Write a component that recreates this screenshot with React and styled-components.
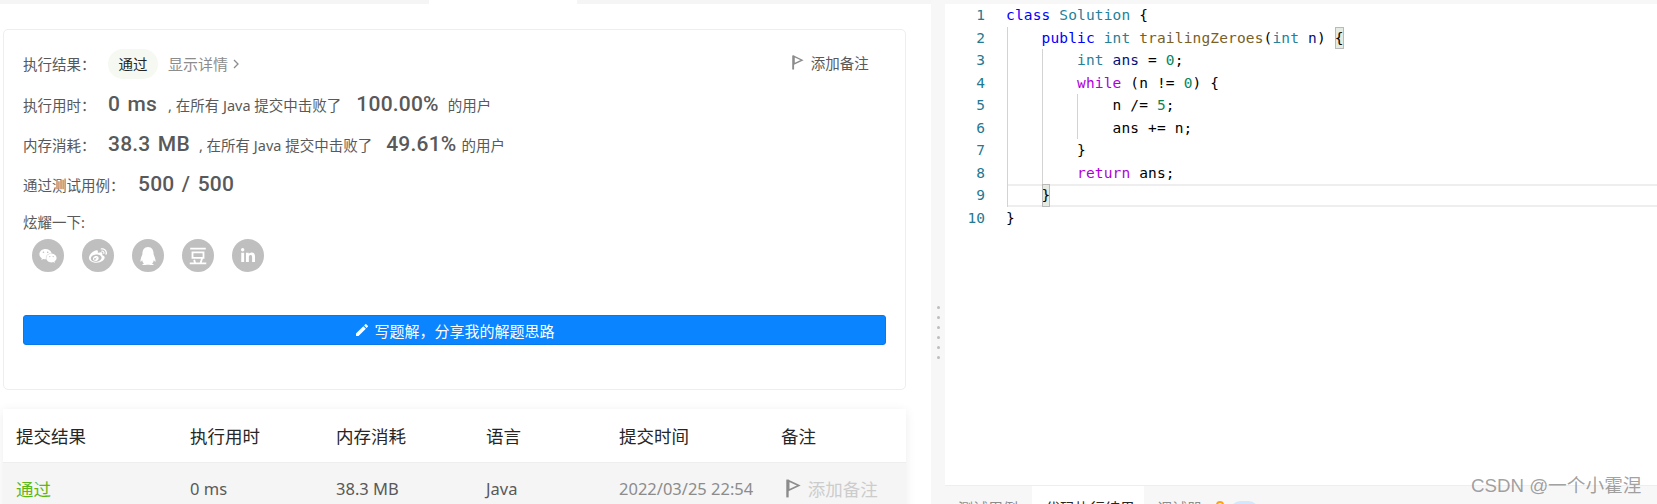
import styled, { createGlobalStyle } from "styled-components";
import { FaWeixin, FaWeibo, FaQq, FaLinkedinIn } from "react-icons/fa";
import { RiDoubanLine } from "react-icons/ri";
import { MdEdit } from "react-icons/md";

const Global = createGlobalStyle`
  html, body { margin: 0; padding: 0; height: 504px; overflow: hidden; background: #fff; }
  body { font-family: "Noto Sans", "Noto Sans CJK SC", sans-serif; }
  * { box-sizing: border-box; }
`;

const Page = styled.div`
  display: flex;
  width: 1657px;
  height: 504px;
  overflow: hidden;
  position: relative;
  background: #f7f7f7;
`;

const LeftPane = styled.div`
  width: 931px;
  flex: none;
  display: flex;
  flex-direction: column;
  background: #fff;
`;

const TopTabs = styled.div`
  height: 4px;
  flex: none;
  display: flex;
`;

const TabStrip = styled.div`
  background: #f5f5f5;
  width: ${p => p.$w}px;
`;

const TabGap = styled.div`
  width: 148px;
`;

const LeftBody = styled.div`
  padding: 25px 25px 0 3px;
  display: flex;
  flex-direction: column;
  gap: 19px;
`;

const Card = styled.div`
  height: 361px;
  border: 1px solid #eeeeee;
  border-radius: 5px;
  padding: 13px 19px 0 19px;
  position: relative;
  color: #595959;
  font-size: 14.5px;
`;

const Row = styled.div`
  display: flex;
  align-items: center;
  height: ${p => p.$h || 40}px;
`;

const Label = styled.div`
  width: ${p => p.$w || 85}px;
  flex: none;
  white-space: pre;
  color: #595959;
`;

const Pill = styled.span`
  width: 50px;
  height: 30px;
  border-radius: 15px;
  background: #f5f9f1;
  color: #262626;
  display: flex;
  align-items: center;
  justify-content: center;
  font-size: 14.5px;
`;

const Detail = styled.span`
  margin-left: 10px;
  font-size: 15px;
  color: #8c8c8c;
`;

const Chevron = styled.svg`
  width: 6px;
  height: 10px;
  margin-left: 5px;
`;

const AddNote = styled.div`
  position: absolute;
  left: 788px;
  top: 22px;
  display: flex;
  align-items: center;
  gap: 7px;
  font-size: 14.5px;
  color: #595959;
`;

const Big = styled.span`
  font-family: Roboto, sans-serif;
  font-weight: 500;
  font-size: 21px;
  color: #595959;
  letter-spacing: 0.2px;
  word-spacing: 2px;
  white-space: pre;
`;

const Beat = styled.span`
  font-size: 14.5px;
  color: #595959;
  white-space: pre;
  margin: 0 ${p => p.$r || 0}px 0 ${p => p.$l || 0}px;
`;

const ShareLabel = styled.div`
  margin-top: 7px;
  line-height: 22px;
`;

const Socials = styled.div`
  display: flex;
  gap: 18px;
  padding-left: 9px;
  margin-top: 6px;
`;

const Social = styled.div`
  width: 32px;
  height: 33px;
  border-radius: 50%;
  background: #bfbfbf;
  color: #fff;
  display: flex;
  align-items: center;
  justify-content: center;
  font-size: ${p => p.$size || 18}px;
`;

const WriteButton = styled.div`
  margin-top: 43px;
  height: 30px;
  width: 863px;
  background: #0a84ff;
  border: 1px solid #0a78e8;
  border-radius: 3px;
  color: #fff;
  font-size: 15px;
  display: flex;
  align-items: center;
  justify-content: center;
  gap: 4px;
`;

const Table = styled.div`
  box-shadow: 0 2px 10px rgba(0, 0, 0, 0.08);
  height: 120px;
`;

const TableRow = styled.div`
  display: grid;
  grid-template-columns: 174px 146px 150px 133px 162px 1fr;
  align-items: center;
  padding: 0 0 ${p => p.$pb || 0}px 13px;
  height: ${p => p.$h}px;
  background: ${p => p.$bg};
  border-bottom: ${p => (p.$line ? "1px solid #eeeeee" : "none")};
`;

const HeadCell = styled.div`
  font-size: 17.5px;
  color: #262626;
`;

const Cell = styled.div`
  font-size: ${p => p.$size || 16.5}px;
  color: ${p => p.$color || "#595959"};
  padding-left: ${p => p.$pad || 0}px;
  display: flex;
  align-items: center;
  gap: 7px;
`;

const Gutter = styled.div`
  width: 14px;
  flex: none;
  display: flex;
  flex-direction: column;
  align-items: center;
  justify-content: center;
  gap: 7px;
  padding-top: 160px;
  height: 504px;
`;

const Dot = styled.span`
  width: 3px;
  height: 3px;
  border-radius: 50%;
  background: #bdbdbd;
`;

const RightPane = styled.div`
  flex: 1;
  min-width: 0;
  display: flex;
  flex-direction: column;
  padding-top: 4px;
`;

const Editor = styled.div`
  height: 481px;
  flex: none;
  background: #fff;
  display: flex;
  font-family: "DejaVu Sans Mono", monospace;
  font-size: 14.5px;
`;

const Numbers = styled.div`
  width: 62px;
  flex: none;
  text-align: right;
  padding-right: 22px;
  color: #237893;
`;

const NumberLine = styled.div`
  height: 22.5px;
  line-height: 22.5px;
`;

const Code = styled.div`
  flex: 1;
  min-width: 0;
`;

const CodeLine = styled.div`
  height: 22.5px;
  line-height: 22.5px;
  white-space: pre;
  position: relative;
  letter-spacing: 0.15px;
  text-indent: -1px;
  color: #000;
  ${p => p.$active && `
    box-shadow: inset 0 2px 0 #eeeeee, inset 0 -2px 0 #eeeeee;
  `}
`;

const Guide = styled.span`
  position: absolute;
  left: ${p => p.$at}px;
  top: 0;
  bottom: 0;
  width: 1px;
  background: #d3d3d3;
`;

const T = styled.span`
  color: ${p => p.$c};
`;

const Match = styled.span`
  background: #e4ebe2;
  outline: 1px solid #b9b9b9;
  outline-offset: -1px;
  display: inline-block;
  height: 22.5px;
  text-indent: 0;
`;

const BottomTabs = styled.div`
  flex: 1;
  display: flex;
  border-top: 1px solid #eeeeee;
  background: #f7f7f7;
  font-size: 15px;
  color: #595959;
  font-family: "Noto Sans CJK SC", sans-serif;
`;

const BottomTab = styled.div`
  padding: 11px 13px 0 13px;
  width: ${p => p.$w}px;
  flex: none;
  background: ${p => (p.$active ? "#fff" : "transparent")};
  color: ${p => (p.$active ? "#262626" : "#8c8c8c")};
  line-height: 22px;
  white-space: pre;
  display: flex;
  gap: 6px;
`;

const Badge = styled.span`
  width: 27px;
  height: 18px;
  margin-top: 4px;
  margin-left: 1px;
  border-radius: 9px;
  background: #d3e8ff;
`;

const Lock = styled.span`
  width: 8px;
  height: 8px;
  margin-top: 4px;
  margin-left: 8px;
  border-radius: 50%;
  border: 2px solid #ffa116;
`;

const Watermark = styled.div`
  position: absolute;
  left: 1471px;
  top: 472px;
  font-family: "Liberation Sans", "Noto Sans CJK SC", sans-serif;
  font-size: 18.7px;
  line-height: 28px;
  color: rgba(120, 120, 120, 0.7);
  white-space: pre;
`;

const Flag = ({ size = 15, color = "#8c8c8c" }) => (
  <svg width={size * 0.78} height={size} viewBox="0 0 12 16">
    <path d="M1 0.5V15.5" stroke={color} strokeWidth="2" fill="none" />
    <path d="M2 1.5L10.5 5.5L2 9.5Z" stroke={color} strokeWidth="1.4" fill="none" />
  </svg>
);

const lines = [
  { g: [], c: [["class", "#0000ff"], [" "], ["Solution", "#267f99"], [" {"]] },
  { g: [0], c: [["    "], ["public", "#0000ff"], [" "], ["int", "#267f99"], [" "], ["trailingZeroes", "#795e26"], ["("], ["int", "#267f99"], [" "], ["n", "#001080"], [") "], ["{", "match"]] },
  { g: [0, 35], c: [["        "], ["int", "#267f99"], [" "], ["ans", "#001080"], [" = "], ["0", "#098658"], [";"]] },
  { g: [0, 35], c: [["        "], ["while", "#af00db"], [" (n != "], ["0", "#098658"], [") {"]] },
  { g: [0, 35, 70], c: [["            n /= "], ["5", "#098658"], [";"]] },
  { g: [0, 35, 70], c: [["            ans += n;"]] },
  { g: [0, 35], c: [["        }"]] },
  { g: [0, 35], c: [["        "], ["return", "#af00db"], [" ans;"]] },
  { g: [0], active: true, c: [["    "], ["}", "match"]] },
  { g: [], c: [["}"]] },
];

export default function App() {
  return (
    <Page>
      <Global />
      <LeftPane>
        <TopTabs>
          <TabStrip $w={429} />
          <TabGap />
          <TabStrip $w={354} />
        </TopTabs>
        <LeftBody>
          <Card>
            <AddNote><Flag />添加备注</AddNote>
            <Row $h={41}>
              <Label>执行结果：</Label>
              <Pill>通过</Pill>
              <Detail>显示详情</Detail>
              <Chevron viewBox="0 0 6 10"><path d="M1 1l4 4-4 4" stroke="#8c8c8c" strokeWidth="1.3" fill="none" /></Chevron>
            </Row>
            <Row>
              <Label>执行用时：</Label>
              <Big>0 ms</Big>
              <Beat $l={11} $r={15}>, 在所有 Java 提交中击败了</Beat>
              <Big>100.00%</Big>
              <Beat $l={9}>的用户</Beat>
            </Row>
            <Row>
              <Label>内存消耗：</Label>
              <Big>38.3 MB</Big>
              <Beat $l={9} $r={14}>, 在所有 Java 提交中击败了</Beat>
              <Big>49.61%</Big>
              <Beat $l={5}>的用户</Beat>
            </Row>
            <Row>
              <Label $w={115}>通过测试用例：</Label>
              <Big>500 / 500</Big>
            </Row>
            <ShareLabel>炫耀一下:</ShareLabel>
            <Socials>
              <Social><FaWeixin /></Social>
              <Social><FaWeibo /></Social>
              <Social><FaQq /></Social>
              <Social $size={22}><RiDoubanLine /></Social>
              <Social $size={16}><FaLinkedinIn /></Social>
            </Socials>
            <WriteButton><MdEdit size={16} />写题解，分享我的解题思路</WriteButton>
          </Card>
          <Table>
            <TableRow $h={54} $bg="#fff" $line>
              <HeadCell>提交结果</HeadCell>
              <HeadCell>执行用时</HeadCell>
              <HeadCell>内存消耗</HeadCell>
              <HeadCell>语言</HeadCell>
              <HeadCell>提交时间</HeadCell>
              <HeadCell>备注</HeadCell>
            </TableRow>
            <TableRow $h={56} $pb={5} $bg="#f5f5f5">
              <Cell $color="#5cb814" $size={17.5}>通过</Cell>
              <Cell>0 ms</Cell>
              <Cell>38.3 MB</Cell>
              <Cell>Java</Cell>
              <Cell $color="#8c8c8c">2022/03/25 22:54</Cell>
              <Cell $color="#cccccc" $size={17.5} $pad={5}><Flag size={19} />添加备注</Cell>
            </TableRow>
          </Table>
        </LeftBody>
      </LeftPane>
      <Gutter>
        <Dot /><Dot /><Dot /><Dot /><Dot /><Dot />
      </Gutter>
      <RightPane>
        <Editor>
          <Numbers>
            {lines.map((_, i) => <NumberLine key={i}>{i + 1}</NumberLine>)}
          </Numbers>
          <Code>
            {lines.map((l, i) => (
              <CodeLine key={i} $active={l.active}>
                {l.g.map(at => <Guide key={at} $at={at} />)}
                {l.c.map(([text, color], j) =>
                  color === "match"
                    ? <Match key={j}>{text}</Match>
                    : <T key={j} $c={color}>{text}</T>
                )}
              </CodeLine>
            ))}
          </Code>
        </Editor>
        <BottomTabs>
          <BottomTab $w={87}>测试用例</BottomTab>
          <BottomTab $active $w={112}>代码执行结果</BottomTab>
          <BottomTab $w={140}>调试器<Lock /><Badge /></BottomTab>
        </BottomTabs>
      </RightPane>
      <Watermark>CSDN @一个小霍涅</Watermark>
    </Page>
  );
}
